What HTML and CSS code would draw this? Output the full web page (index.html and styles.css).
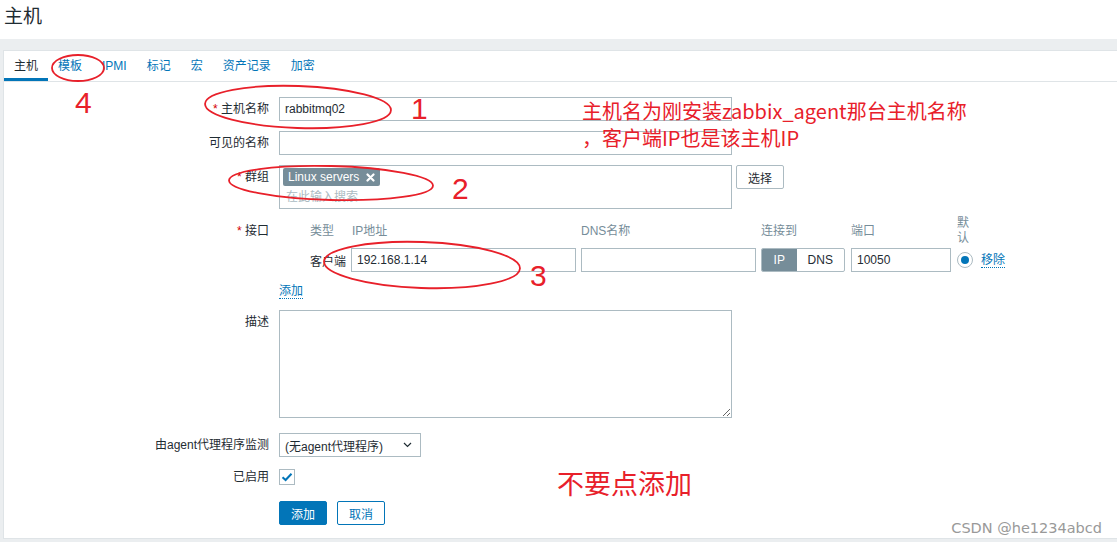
FILE: index.html
```html
<!DOCTYPE html>
<html lang="zh-CN">
<head>
<meta charset="utf-8">
<title>主机</title>
<link rel="stylesheet" href="styles.css">
</head>
<body>
<header class="page-header"><h1 class="page-title">主机</h1></header>
<main class="page-main">
  <section class="card">
    <nav class="tabs">
      <a class="tab active">主机</a>
      <a class="tab">模板</a>
      <a class="tab">IPMI</a>
      <a class="tab">标记</a>
      <a class="tab">宏</a>
      <a class="tab">资产记录</a>
      <a class="tab">加密</a>
    </nav>
    <form class="form">
      <div class="row row-host">
        <label class="lbl"><span class="req">*</span> 主机名称</label>
        <div class="field"><input class="input wide" type="text" value="rabbitmq02"></div>
      </div>
      <div class="row row-visible">
        <label class="lbl">可见的名称</label>
        <div class="field"><input class="input wide" type="text" value=""></div>
      </div>
      <div class="row row-group">
        <label class="lbl lbl-top"><span class="req">*</span> 群组</label>
        <div class="field field-inline">
          <div class="multiselect">
            <span class="chip">Linux servers
              <svg class="chip-x" width="9" height="9" viewBox="0 0 9 9"><path d="M1.5 1.5 L7.5 7.5 M7.5 1.5 L1.5 7.5" stroke="#fff" stroke-width="2.2" stroke-linecap="round"/></svg>
            </span>
            <span class="placeholder">在此输入搜索</span>
          </div>
          <button type="button" class="btn-grey">选择</button>
        </div>
      </div>
      <div class="row row-iface">
        <label class="lbl lbl-iface"><span class="req">*</span> 接口</label>
        <div class="field">
          <div class="iface">
            <span></span>
            <span class="th">类型</span>
            <span class="th th-ip">IP地址</span>
            <span class="th">DNS名称</span>
            <span class="th">连接到</span>
            <span class="th">端口</span>
            <span class="th th-default">默认</span>
            <span></span>

            <span></span>
            <span class="td-type">客户端</span>
            <span><input class="input ip" type="text" value="192.168.1.14"></span>
            <span><input class="input dns" type="text" value=""></span>
            <span class="toggle"><span class="seg seg-on">IP</span><span class="seg">DNS</span></span>
            <span><input class="input port" type="text" value="10050"></span>
            <span class="radio"><span class="radio-dot"></span></span>
            <a class="link">移除</a>
          </div>
          <a class="link add-link">添加</a>
        </div>
      </div>
      <div class="row row-desc">
        <label class="lbl lbl-top">描述</label>
        <div class="field"><textarea class="textarea"></textarea></div>
      </div>
      <div class="row row-proxy">
        <label class="lbl">由agent代理程序监测</label>
        <div class="field">
          <div class="select">(无agent代理程序)
            <svg class="chev" width="9" height="6" viewBox="0 0 9 6"><path d="M1 1 L4.5 4.5 L8 1" fill="none" stroke="#1f2c33" stroke-width="1.2"/></svg>
          </div>
        </div>
      </div>
      <div class="row row-enabled">
        <label class="lbl">已启用</label>
        <div class="field">
          <span class="checkbox"><svg width="14" height="14" viewBox="0 0 14 14"><path d="M2.5 7.2 L5.6 10 L11.5 3.8" fill="none" stroke="#0275b8" stroke-width="2"/></svg></span>
        </div>
      </div>
      <div class="row row-buttons">
        <span></span>
        <div class="field field-buttons">
          <button type="button" class="btn-primary">添加</button>
          <button type="button" class="btn-alt">取消</button>
        </div>
      </div>
    </form>
  </section>
</main>

<svg class="marks" width="1117" height="542" viewBox="0 0 1117 542">
  <ellipse cx="298" cy="107" rx="93" ry="21" fill="none" stroke="#e8202a" stroke-width="1.8" transform="rotate(2 298 107)"/>
  <ellipse cx="331" cy="183" rx="102" ry="17" fill="none" stroke="#e8202a" stroke-width="1.8" transform="rotate(1.5 331 183)"/>
  <ellipse cx="422" cy="265" rx="98" ry="23" fill="none" stroke="#e8202a" stroke-width="1.8" transform="rotate(2 422 265)"/>
  <ellipse cx="78" cy="68" rx="26" ry="13" fill="none" stroke="#e8202a" stroke-width="1.8"/>
</svg>
<div class="note num n1">1</div>
<div class="note num n2">2</div>
<div class="note num n3">3</div>
<div class="note num n4">4</div>
<div class="note msg">主机名为刚安装zabbix_agent那台主机名称<br>，客户端IP也是该主机IP</div>
<div class="note warn">不要点添加</div>
<div class="watermark">CSDN @he1234abcd</div>
</body>
</html>
```
FILE: styles.css
```css
* { box-sizing: border-box; }
html, body { margin: 0; padding: 0; }
body {
  width: 1117px;
  height: 542px;
  overflow: hidden;
  position: relative;
  background: #fff;
  color: #1f2c33;
  font-family: "Liberation Sans", Arial, "Noto Sans CJK SC", sans-serif;
  font-size: 12px;
}
.page-header {
  height: 39px;
  padding-left: 4px;
  background: #fff;
}
.page-title {
  margin: 0;
  font-size: 19px;
  font-weight: normal;
  line-height: 34px;
  color: #1f2c33;
}
.page-main {
  background: #ebeef0;
  padding: 11px 0 3px 3px;
  height: 503px;
}
.card {
  background: #fff;
  border: 1px solid #dfe4e7;
  border-right: none;
  height: 489px;
}
.tabs {
  display: flex;
  height: 31px;
  border-bottom: 1px solid #dfe4e7;
}
.tab {
  padding: 0 10px;
  line-height: 30px;
  color: #0275b8;
  cursor: pointer;
}
.tab.active {
  color: #1f2c33;
  box-shadow: inset 0 -3px 0 #0275b8;
}
.form {
  padding-top: 15px;
  display: flex;
  flex-direction: column;
}
.row {
  display: grid;
  grid-template-columns: 265px 1fr;
  column-gap: 10px;
  align-items: center;
}
.row-visible, .row-group { margin-top: 10px; }
.row-group, .row-desc, .row-iface { align-items: start; }
.row-iface { margin-top: 6px; }
.row-desc { margin-top: 11px; }
.row-proxy { margin-top: 15px; }
.row-enabled { margin-top: 12px; }
.row-buttons { margin-top: 16px; }
.lbl {
  text-align: right;
  line-height: 14px;
  white-space: nowrap;
}
.lbl-top { line-height: 24px; }
.lbl-iface { padding-top: 9px; }
.req { color: #d40000; }
.field { display: flex; flex-direction: column; align-items: flex-start; }
.field-inline { flex-direction: row; gap: 4px; }
.input {
  height: 24px;
  border: 1px solid #acbbc2;
  background: #fff;
  padding: 0 5px;
  font: inherit;
  color: #1f2c33;
  outline: none;
}
.wide { width: 453px; }
.multiselect {
  width: 453px;
  height: 44px;
  border: 1px solid #acbbc2;
  padding: 2px 0 0 3px;
  display: flex;
  flex-direction: column;
  align-items: flex-start;
}
.chip {
  display: inline-flex;
  align-items: center;
  gap: 7px;
  height: 18px;
  padding: 0 5px 0 5px;
  background: #768d99;
  color: #fff;
  border-radius: 2px;
}
.chip-x { display: block; }
.placeholder {
  margin-top: 3px;
  padding-left: 3px;
  color: #acbbc2;
  line-height: 16px;
}
.btn-grey {
  height: 24px;
  width: 48px;
  border: 1px solid #acbbc2;
  background: #fff;
  color: #1f2c33;
  font: inherit;
  border-radius: 2px;
  padding: 0;
}
.iface {
  display: grid;
  grid-template-columns: 31px 41px 230px 180px 90px 106px 24px auto;
  grid-template-rows: 31px 24px;
  row-gap: 2px;
  align-items: center;
}
.th { color: #768d99; line-height: 14px; white-space: nowrap; }
.th-ip { padding-left: 1px; }
.th-default { white-space: normal; width: 14px; line-height: 15px; }
.td-type { color: #1f2c33; }
.ip { width: 225px; }
.dns { width: 175px; }
.port { width: 100px; }
.toggle {
  display: flex;
  width: 84px;
  height: 24px;
  border: 1px solid #acbbc2;
  border-radius: 2px;
  overflow: hidden;
}
.seg {
  display: flex;
  align-items: center;
  justify-content: center;
  width: 48px;
  color: #1f2c33;
}
.seg-on { width: 35px; background: #768d99; color: #fff; }
.radio {
  width: 16px;
  height: 16px;
  border: 1px solid #acbbc2;
  border-radius: 50%;
  display: flex;
  align-items: center;
  justify-content: center;
}
.radio-dot { width: 8px; height: 8px; border-radius: 50%; background: #0275b8; }
.link {
  color: #0275b8;
  border-bottom: 1px dotted #0275b8;
  line-height: 14px;
  cursor: pointer;
}
.add-link { margin-top: 12px; }
.textarea {
  width: 453px;
  height: 108px;
  border: 1px solid #acbbc2;
  font: inherit;
  outline: none;
  display: block;
}
.select {
  width: 142px;
  height: 24px;
  border: 1px solid #acbbc2;
  display: flex;
  align-items: center;
  justify-content: space-between;
  padding: 0 8px 0 5px;
  color: #1f2c33;
}
.chev { display: block; }
.checkbox {
  width: 16px;
  height: 16px;
  border: 1px solid #acbbc2;
  display: flex;
  align-items: center;
  justify-content: center;
}
.checkbox svg { display: block; }
.field-buttons { flex-direction: row; gap: 10px; }
.btn-primary, .btn-alt {
  height: 24px;
  width: 48px;
  font: inherit;
  border-radius: 2px;
  padding: 0;
}
.btn-primary { background: #0275b8; border: 1px solid #0275b8; color: #fff; }
.btn-alt { background: #fff; border: 1px solid #0275b8; color: #0275b8; }

.marks { position: absolute; left: 0; top: 0; pointer-events: none; }
.note {
  position: absolute;
  color: #e8202a;
  font-family: "Noto Sans CJK SC", "Liberation Sans", sans-serif;
  white-space: nowrap;
  pointer-events: none;
}
.num { font-family: "Liberation Sans", Arial, sans-serif; font-size: 30px; line-height: 30px; }
.n1 { left: 411px; top: 94px; }
.n2 { left: 452px; top: 174px; }
.n3 { left: 530px; top: 261px; }
.n4 { left: 75px; top: 88px; }
.msg { left: 582px; top: 97px; font-size: 20px; line-height: 27px; }
.warn { left: 557px; top: 464px; font-size: 27px; line-height: 38px; }
.watermark {
  position: absolute;
  right: 15px;
  bottom: 6px;
  color: #999;
  font-family: "DejaVu Sans", sans-serif;
  font-size: 14.5px;
}
```
